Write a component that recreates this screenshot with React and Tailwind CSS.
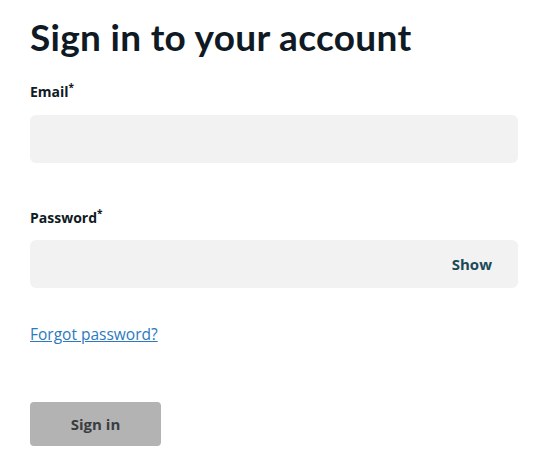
export default function App() {
  return (
    <div className="min-h-screen bg-white px-[30px] pt-[14px] text-[#0f1a24]" style={{ fontFamily: '"Open Sans", sans-serif' }}>
      <h1 className="text-[37px] font-bold leading-[46px] tracking-[0.3px]" style={{ fontFamily: 'Lato, sans-serif' }}>
        Sign in to your account
      </h1>
      <form className="mt-[22px] w-[488px]">
        <label className="block text-[14px] font-bold leading-[18px]">
          Email<span className="align-super text-[10px] leading-none">*</span>
        </label>
        <div className="mt-[14px] h-[48px] rounded-[6px] bg-[#f2f2f2]"></div>

        <label className="mt-[45px] block text-[14px] font-bold leading-[18px]">
          Password<span className="align-super text-[10px] leading-none">*</span>
        </label>
        <div className="mt-[14px] flex h-[48px] items-center justify-end rounded-[6px] bg-[#f2f2f2] pr-[26px]">
          <span className="text-[15px] font-bold text-[#1b4a56]">Show</span>
        </div>

        <a href="#" className="mt-[37px] block w-max text-[15.5px] leading-[18px] text-[#2d79c0] underline">
          Forgot password?
        </a>

        <button type="button" className="mt-[59px] h-[44px] w-[131px] rounded-[4px] bg-[#b3b3b3] text-[15px] font-bold text-[#3a3d40]">
          Sign in
        </button>
      </form>
    </div>
  );
}
